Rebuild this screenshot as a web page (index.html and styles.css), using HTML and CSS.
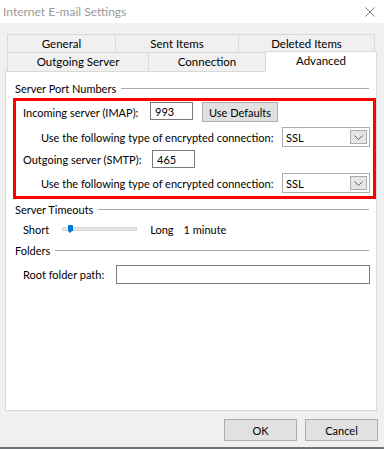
FILE: index.html
```html
<!DOCTYPE html>
<html>
<head>
<meta charset="utf-8">
<link rel="stylesheet" href="styles.css">
</head>
<body>
<div class="window">
  <div class="titlebar">
    <span class="title">Internet E-mail Settings</span>
    <svg class="close" width="10" height="10" viewBox="0 0 10 10"><path d="M0.5 0.5L9.5 9.5M9.5 0.5L0.5 9.5" stroke="#7a7a7a" stroke-width="1" fill="none"/></svg>
  </div>
  <div class="tabs">
    <div class="tabrow row1">
      <div class="tab t-general">General</div>
      <div class="tab t-sent">Sent Items</div>
      <div class="tab t-deleted">Deleted Items</div>
    </div>
    <div class="tabrow row2">
      <div class="tab t-outgoing">Outgoing Server</div>
      <div class="tab t-connection">Connection</div>
      <div class="tab t-advanced selected">Advanced</div>
    </div>
  </div>
  <div class="panel">
    <div class="group-head first">Server Port Numbers</div>
    <div class="highlight">
      <div class="row r1">
        <span class="label lbl-in">Incoming server (IMAP):</span>
        <span class="input port">993</span>
        <span class="button defaults">Use Defaults</span>
      </div>
      <div class="row r2 indent">
        <span class="label">Use the following type of encrypted connection:</span>
        <span class="select"><span class="sel-val">SSL</span><span class="sel-btn"><svg width="9" height="5" viewBox="0 0 9 5"><path d="M0.5 0.5L4.5 4.5L8.5 0.5" stroke="#606060" fill="none"/></svg></span></span>
      </div>
      <div class="row r3">
        <span class="label lbl-out">Outgoing server (SMTP):</span>
        <span class="input port">465</span>
      </div>
      <div class="row r4 indent">
        <span class="label">Use the following type of encrypted connection:</span>
        <span class="select"><span class="sel-val">SSL</span><span class="sel-btn"><svg width="9" height="5" viewBox="0 0 9 5"><path d="M0.5 0.5L4.5 4.5L8.5 0.5" stroke="#606060" fill="none"/></svg></span></span>
      </div>
    </div>
    <div class="group-head timeouts">Server Timeouts</div>
    <div class="row slider-row">
      <span class="label">Short</span>
      <span class="slider"><span class="track"></span><span class="thumb"></span></span>
      <span class="label long">Long</span>
      <span class="label minute">1 minute</span>
    </div>
    <div class="group-head folders">Folders</div>
    <div class="row root-row">
      <span class="label lbl-root">Root folder path:</span>
      <span class="input root"></span>
    </div>
  </div>
  <div class="footer">
    <span class="button action">OK</span>
    <span class="button action">Cancel</span>
  </div>
</div>
</body>
</html>
```
FILE: styles.css
```css
html, body {
  margin: 0;
  padding: 0;
}
body {
  width: 384px;
  height: 449px;
  overflow: hidden;
  background: #f0f0f0;
  font-family: Lato, "Noto Sans", sans-serif;
  font-size: 11px;
  color: #000;
}
.window {
  height: 449px;
  box-sizing: border-box;
  border-bottom: 2px solid #6e7276;
  display: flex;
  flex-direction: column;
}
.titlebar {
  height: 23px;
  background: #fff;
  display: flex;
  align-items: center;
  padding: 0 9px 0 3px;
  flex: none;
}
.title {
  color: #9a9a9a;
  flex: 1;
  font-size: 12px;
}
.close {
  display: block;
}
.tabs {
  margin: 11px 0 0 7px;
  display: flex;
  flex-direction: column;
  flex: none;
}
.tabrow {
  display: flex;
  height: 19px;
}
.row1 .tab {
  height: 19px;
  border: 1px solid #d9d9d9;
}
.row2 {
  height: 18px;
  align-items: flex-end;
}
.row2 .tab {
  height: 18px;
  border: 1px solid #d9d9d9;
  border-top: none;
  border-bottom: none;
}
.tab {
  box-sizing: border-box;
  display: flex;
  align-items: center;
  justify-content: center;
  background: #f0f0f0;
  line-height: 1;
  font-size: 11.5px;
}
.tab + .tab {
  margin-left: -1px;
}
.t-general { width: 109px; }
.t-sent { width: 124px; }
.t-deleted { width: 137px; }
.t-outgoing { width: 142px; }
.t-connection { width: 118px; }
.row2 .t-advanced {
  width: 112px;
  height: 21px;
  margin-bottom: -1px;
  border-top: 1px solid #d9d9d9;
  background: #fff;
  position: relative;
  z-index: 1;
  padding-bottom: 2px;
}
.panel {
  margin-left: 5px;
  width: 372px;
  height: 340px;
  box-sizing: border-box;
  border: 1px solid #d9d9d9;
  background: #fff;
  padding: 0 7px 0 9px;
  flex: none;
}
.group-head {
  display: flex;
  align-items: center;
  height: 16px;
  white-space: nowrap;
}
.group-head::after {
  content: "";
  flex: 1;
  border-top: 1px solid #a9a9a9;
  margin-left: 5px;
}
.group-head.first { margin-top: 8px; }
.group-head.timeouts { margin-top: 2px; }
.group-head.folders { margin-top: 5px; }
.highlight {
  margin: 2px -7px 0 -2px;
  border: 3px solid #ff0000;
  padding: 1px 3px 3px 7px;
}
.row {
  display: flex;
  align-items: center;
  height: 20px;
  white-space: nowrap;
}
.label { flex: none; }
.r2 { margin-top: 5px; }
.r3 { margin-top: 2px; }
.r4 { margin-top: 4px; }
.indent { padding-left: 18px; }
.lbl-in { width: 127px; }
.lbl-out { width: 129px; }
.input {
  box-sizing: border-box;
  height: 18px;
  border: 1px solid #7a7a7a;
  background: #fff;
  display: flex;
  align-items: center;
  padding-left: 4px;
  flex: none;
}
.r1 .input { align-self: flex-start; }
.port { width: 43px; }
.button {
  box-sizing: border-box;
  border: 1px solid #adadad;
  background: #e1e1e1;
  display: flex;
  align-items: center;
  justify-content: center;
  flex: none;
}
.defaults {
  width: 76px;
  height: 20px;
  margin-left: 9px;
}
.select {
  margin-left: auto;
  box-sizing: border-box;
  width: 88px;
  height: 20px;
  border: 1px solid #acacac;
  background: #fff;
  display: flex;
  align-items: center;
  padding: 2px;
  flex: none;
}
.sel-val {
  flex: 1;
  padding-left: 1px;
}
.sel-btn {
  box-sizing: border-box;
  width: 17px;
  height: 14px;
  border: 1px solid #acacac;
  background: #e5e5e5;
  display: flex;
  align-items: center;
  justify-content: center;
}
.sel-btn svg { display: block; }
.slider-row {
  margin-top: 4px;
  height: 16px;
  padding-left: 8px;
}
.slider {
  position: relative;
  width: 75px;
  height: 16px;
  margin-left: 13px;
  display: flex;
  align-items: center;
  flex: none;
}
.track {
  width: 75px;
  height: 4px;
  box-sizing: border-box;
  border: 1px solid #d6d6d6;
  background: #e7e7e7;
}
.thumb {
  position: absolute;
  left: 6px;
  top: 4px;
  width: 5px;
  height: 6px;
  background: #007ad9;
  border-radius: 1px 1px 0 0;
}
.thumb::after {
  content: "";
  position: absolute;
  left: 0;
  top: 6px;
  border-left: 2.5px solid transparent;
  border-right: 2.5px solid transparent;
  border-top: 2px solid #007ad9;
}
.long { margin-left: 13px; }
.minute { margin-left: 10px; }
.root-row {
  margin-top: 6px;
  padding-left: 8px;
  margin-right: -1px;
}
.lbl-root { width: 93px; }
.input.root {
  flex: 1;
  height: 19px;
}
.footer {
  display: flex;
  justify-content: flex-end;
  gap: 8px;
  padding-right: 6px;
  margin-top: 8px;
}
.action {
  width: 73px;
  height: 22px;
}
```
